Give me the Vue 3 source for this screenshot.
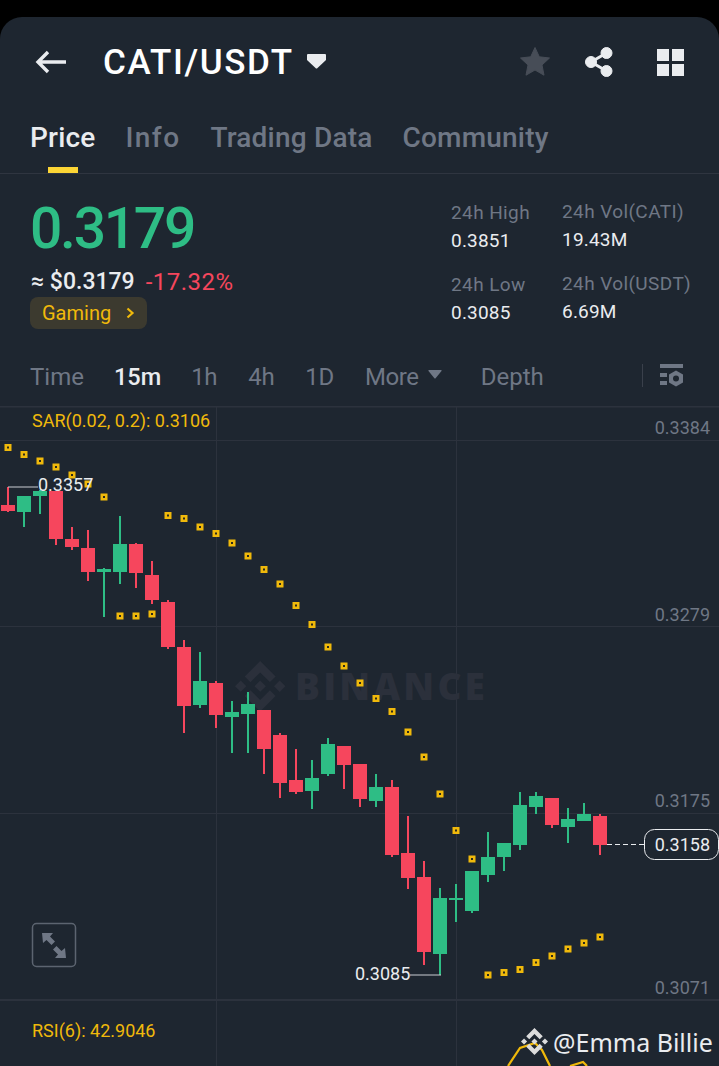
<script setup>
const BN = 'M16.624 13.9202l2.7175 2.7154-7.353 7.353-7.353-7.352 2.7175-2.7164 4.6355 4.6595 4.6356-4.6595zm4.6366-4.6366L24 12l-2.7154 2.7164L18.5682 12l2.6924-2.7164zm-9.272.001l2.7163 2.6914-2.7164 2.7174v-.001L9.2721 12l2.7164-2.7154zm-9.2722-.001L5.4088 12l-2.6914 2.6924L0 12l2.7164-2.7164zM11.9885.0115l7.353 7.329-2.7174 2.7154-4.6356-4.6356-4.6355 4.6595-2.7174-2.7154 7.353-7.353z'

const tabs = ['Price', 'Info', 'Trading Data', 'Community']
const ranges = ['Time', '15m', '1h', '4h', '1D']

// [color, bodyTop, bodyBottom, wickTop, wickBottom]
const raw = [
  ['r',505,511,487,512],['g',496,512,496,527],['g',491,496,490,514],['r',491,539,491,545],
  ['r',539,547,527,550],['r',548,572,530,581],['g',569,572,568,617],['g',544,572,516,584],
  ['r',544,573,543,588],['r',575,600,561,604],['r',602,647,600,649],['r',647,706,640,733],
  ['g',681,705,652,708],['r',683,715,681,728],['g',712,717,701,753],['g',704,714,692,753],
  ['r',710,749,710,774],['r',735,783,733,798],['r',780,792,749,794],['g',778,791,760,809],
  ['g',744,774,738,776],['r',746,765,746,789],['r',764,799,764,807],['g',787,801,774,807],
  ['r',787,855,780,857],['r',853,878,816,889],['r',877,952,861,965],['g',898,954,888,975],
  ['g',898,900,884,922],['g',871,911,871,913],['g',857,875,832,882],['g',843,857,843,871],
  ['g',805,845,792,850],['g',796,807,792,814],['r',798,825,798,828],['g',819,827,808,843],
  ['g',814,821,803,821],['r',816,845,814,855]
]
const candles = raw.map((c, i) => ({
  x: 8 + 16 * i,
  fill: c[0] === 'r' ? '#F6465D' : '#2EBD85',
  top: c[1], h: c[2] - c[1], wt: c[3], wh: c[4] - c[3]
}))

const sar = [
  [8,447.5],[24,454.5],[40,461],[56,467],[72,475],[88,484],[104,497],
  [120,616],[136,616],[152,614],
  [168,515.5],[184,518.5],[200,527],[216,533.5],[232,543],[248,556],[264,569.5],[280,584],
  [296,605.5],[312,624.5],[328,647],[344,666],[360,683],[376,698.5],[392,711.5],[408,732],
  [424,757],[440,794],[456,830.5],[472,859],
  [488,975],[504,972.5],[520,969.5],[536,962.5],[552,956],[568,949],[584,943],[600,937]
]
const axis = [
  { t: '0.3384', y: 429 }, { t: '0.3279', y: 616 },
  { t: '0.3175', y: 802 }, { t: '0.3071', y: 989 }
]
</script>

<template>
  <div class="screen">
    <div class="panel">
      <header class="top">
        <svg class="back" width="32" height="24" viewBox="0 0 32 24" fill="none" stroke="#eaecef" stroke-width="3.4">
          <path d="M31 12H3M13 2 3 12l10 10" />
        </svg>
        <span class="pair">CATI/USDT</span>
        <svg class="pair-caret" width="19" height="15" viewBox="0 0 19 15"><path d="M1 0h17q1 0 1 1v5L10.500 14q-1 1-2 0L0 6V1q0-1 1-1z" fill="#eaecef"/></svg>
        <div class="top-icons">
          <svg class="star" width="30" height="30" viewBox="0 0 30 30"><path d="M15 .5l4.300 9.300 10.200 1.200-7.500 7 2 10.200L15 23l-9 5.200 2-10.200-7.500-7 10.200-1.200z" fill="#474d57" stroke="#474d57" stroke-linejoin="round"/></svg>
          <svg class="share" width="30" height="30" viewBox="0 0 30 30" fill="#eaecef" stroke="#eaecef">
            <circle cx="7" cy="15" r="5.500"/><circle cx="22.500" cy="6" r="5.500"/><circle cx="22.500" cy="24" r="5.500"/>
            <path d="M7 15 22.500 6M7 15l15.500 9" stroke-width="3" fill="none"/>
          </svg>
          <div class="grid-icon"><i></i><i></i><i></i><i></i></div>
        </div>
      </header>

      <nav class="tabs">
        <span v-for="(t, i) in tabs" :key="t" class="tab" :class="{ on: i === 0 }">{{ t }}</span>
      </nav>

      <section class="stats">
        <div class="left">
          <div class="price">0.3179</div>
          <div class="sub"><span class="usd">≈ $0.3179</span><span class="pct">-17.32%</span></div>
          <div class="badge">Gaming
            <svg width="9" height="12" viewBox="0 0 9 12" fill="none" stroke="#F0B90B" stroke-width="2.200"><path d="M1.500 1.500 6.500 6l-5 4.500"/></svg>
          </div>
        </div>
        <div class="right">
          <div class="cell"><div class="k">24h High</div><div class="v">0.3851</div></div>
          <div class="cell up"><div class="k">24h Vol(CATI)</div><div class="v">19.43M</div></div>
          <div class="cell"><div class="k">24h Low</div><div class="v">0.3085</div></div>
          <div class="cell up"><div class="k">24h Vol(USDT)</div><div class="v">6.69M</div></div>
        </div>
      </section>

      <div class="ranges">
        <span v-for="r in ranges" :key="r" class="range" :class="{ on: r === '15m' }">{{ r }}</span>
        <span class="range more">More
          <svg width="14" height="9" viewBox="0 0 14 9"><path d="M1 0h12q1 0 .5 1L7.800 8q-.8 1-1.600 0L.5 1Q0 0 1 0z" fill="#6f7785"/></svg>
        </span>
        <span class="range depth">Depth</span>
        <span class="divider"></span>
        <svg class="cfg" width="24" height="24" viewBox="0 0 24 24" fill="#6f7785">
          <rect x="0" y="0" width="23" height="4"/>
          <rect x="0" y="9" width="7" height="4"/>
          <rect x="0" y="17" width="7" height="4"/>
          <path fill-rule="evenodd" d="M16 6.500l7 4v8l-7 4-7-4v-8zM16 11.500a3 3 0 1 0 0 6 3 3 0 0 0 0-6z"/>
        </svg>
      </div>

      <svg class="chart" width="719" height="660" viewBox="0 406 719 660">
        <g fill="#2c323d">
          <rect x="0" y="405.500" width="719" height="2"/>
          <rect x="0" y="440" width="719" height="1"/>
          <rect x="0" y="626" width="719" height="1"/>
          <rect x="0" y="813" width="719" height="1"/>
          <rect x="0" y="999" width="719" height="2"/>
          <rect x="216" y="406" width="1" height="660"/>
          <rect x="456" y="406" width="1" height="660"/>
        </g>

        <path :d="BN" fill="#2b303b" transform="translate(235 661) scale(2.100)"/>
        <text x="295" y="700" class="mark">BINANCE</text>

        <g v-for="c in candles" :key="c.x" :fill="c.fill">
          <rect :x="c.x - 1" :y="c.wt" width="2" :height="c.wh"/>
          <rect :x="c.x - 7" :y="c.top" width="14" :height="c.h"/>
        </g>

        <rect v-for="d in sar" :key="d[0]" :x="d[0] - 2.250" :y="d[1] - 2.250" width="4.500" height="4.500" fill="#2c2a1a" stroke="#F0B90B" stroke-width="2.500"/>

        <path d="M8 487H38M410 975h31" stroke="#c9ccd2" stroke-width="1" fill="none"/>
        <text x="38" y="491" class="mk">0.3357</text>
        <text x="355" y="980" class="mk">0.3085</text>

        <text x="32" y="427" class="ind">SAR(0.02, 0.2): 0.3106</text>
        <text x="32" y="1037" class="ind">RSI(6): 42.9046</text>

        <text v-for="a in axis" :key="a.t" x="710" :y="a.y + 5" class="ax">{{ a.t }}</text>

        <path d="M607 844.500H644" stroke="#eaecef" stroke-dasharray="5 3" fill="none"/>
        <rect x="644.500" y="829.500" width="74" height="30" rx="10" fill="#1e2630" stroke="#eaecef"/>
        <text x="710" y="851" class="last">0.3158</text>

        <rect x="32.500" y="923.500" width="43" height="43" rx="4" fill="none" stroke="#5c6470" stroke-width="1.500"/>
        <g fill="#6f7785">
          <path d="M42 933h11l-3 3.500 5 5-3.500 3.500-5-5-3.500 3z"/>
          <path d="M66 958H55l3-3.500-5-5 3.500-3.500 5 5 3.500-3z"/>
        </g>

        <path d="M508 1066 520 1048l15-5 7 7 8 16M570 1066l13-4 4 4" fill="none" stroke="#F0B90B" stroke-width="2.200"/>
        <path :d="BN" fill="#dcdcdc" transform="translate(521 1028) scale(1.125)"/>
        <text x="553" y="1052" class="wm">@Emma Billie</text>
      </svg>
    </div>
  </div>
</template>

<style>
html, body { margin: 0; background: #000; }
</style>

<style scoped>
.screen {
  width: 719px;
  height: 1066px;
  padding-top: 17px;
  box-sizing: border-box;
  background: #000;
  overflow: hidden;
  font-family: Roboto, "Noto Sans", sans-serif;
}
.panel {
  height: 1049px;
  background: #1e2630;
  border-radius: 22px 22px 0 0;
  overflow: hidden;
}
.top {
  height: 90px;
  display: flex;
  align-items: center;
  padding-left: 35px;
}
.back { margin-right: 36px; }
.pair {
  font-size: 35px;
  font-weight: 500;
  color: #fff;
  letter-spacing: 1.600px;
}
.pair-caret { margin-left: 13px; margin-top: -1px; }
.top-icons {
  margin-left: auto;
  margin-right: 35px;
  display: flex;
  align-items: center;
}
.share { margin-left: 34px; margin-right: 43px; }
.grid-icon {
  display: grid;
  grid-template-columns: 12px 12px;
  grid-auto-rows: 12px;
  gap: 3px;
  width: 27px;
}
.grid-icon i { background: #eaecef; display: block; }
.tabs {
  border-bottom: 1px solid #2f3540;
  display: flex;
  gap: 30px;
  padding: 15px 0 0 30px;
  height: 51px;
}
.tab {
  position: relative;
  font-size: 28px;
  line-height: 32px;
  color: #6f7785;
  font-weight: 500;
  letter-spacing: .2px;
}
.tab:nth-child(2) { letter-spacing: 1.400px; }
.tab.on { color: #eaecef; }
.tab.on::after {
  content: "";
  position: absolute;
  left: 18px;
  top: 45px;
  width: 30px;
  height: 6px;
  background: #FCD535;
}
.stats {
  height: 172px;
  display: flex;
  justify-content: space-between;
}
.left { padding: 25px 0 0 30px; }
.price {
  font-size: 57px;
  line-height: 60px;
  font-weight: 500;
  letter-spacing: -2.300px;
  color: #2EBD85;
}
.sub {
  margin: 9px 0 0 1px;
  display: flex;
  gap: 11px;
  font-size: 23px;
  line-height: 28px;
}
.usd { color: #eaecef; font-weight: 500; }
.pct { color: #F6465D; font-size: 24px; letter-spacing: .5px; }
.badge {
  margin-top: 1px;
  width: 117px;
  height: 32px;
  box-sizing: border-box;
  padding-left: 12px;
  border-radius: 8px;
  background: #3c3a2f;
  color: #F0B90B;
  font-size: 20px;
  line-height: 32px;
  display: flex;
  align-items: center;
  gap: 15px;
}
.right {
  width: 268px;
  padding-top: 26px;
  display: grid;
  grid-template-columns: 111px 1fr;
  grid-auto-rows: 54px;
  row-gap: 18px;
  align-content: start;
}
.cell.up { margin-top: -1px; }
.k { font-size: 19px; line-height: 26px; color: #6f7785; letter-spacing: .4px; }
.v { font-size: 19px; line-height: 26px; margin-top: 2px; color: #eaecef; letter-spacing: .2px; }
.ranges {
  height: 60px;
  display: flex;
  align-items: center;
  padding: 2px 0 0 30px;
  box-sizing: border-box;
  gap: 31px;
}
.range { font-size: 24px; color: #6f7785; white-space: nowrap; }
.range.on { color: #eaecef; font-weight: 500; font-size: 23.500px; margin: 0 -1px 0 -1px; }
.range:nth-child(n+3):nth-child(-n+5) { letter-spacing: -.3px; }
.more { display: flex; align-items: center; gap: 9px; letter-spacing: -.4px; }
.more svg { margin-top: -5px; }
.depth { margin-left: 8px; }
.divider {
  margin-left: auto;
  width: 1px;
  height: 23px;
  background: #3a404b;
  margin-top: -4px;
}
.cfg { margin: -2px 35px 0 -14px; }
.chart { display: block; }
.mark {
  font-family: "Open Sans", sans-serif;
  font-weight: 800;
  font-size: 37px;
  letter-spacing: 3.200px;
  fill: #2b303b;
}
.mk { font-family: Roboto, sans-serif; font-size: 18px; fill: #eaecef; }
.ind { font-family: Roboto, sans-serif; font-size: 18px; fill: #F0B90B; }
.ax { font-family: Roboto, sans-serif; font-size: 18px; fill: #6f7785; text-anchor: end; }
.last { font-family: Roboto, sans-serif; font-size: 18px; fill: #eaecef; text-anchor: end; }
.wm { font-family: "Noto Sans", sans-serif; font-size: 25px; fill: #eaecef; }
</style>
